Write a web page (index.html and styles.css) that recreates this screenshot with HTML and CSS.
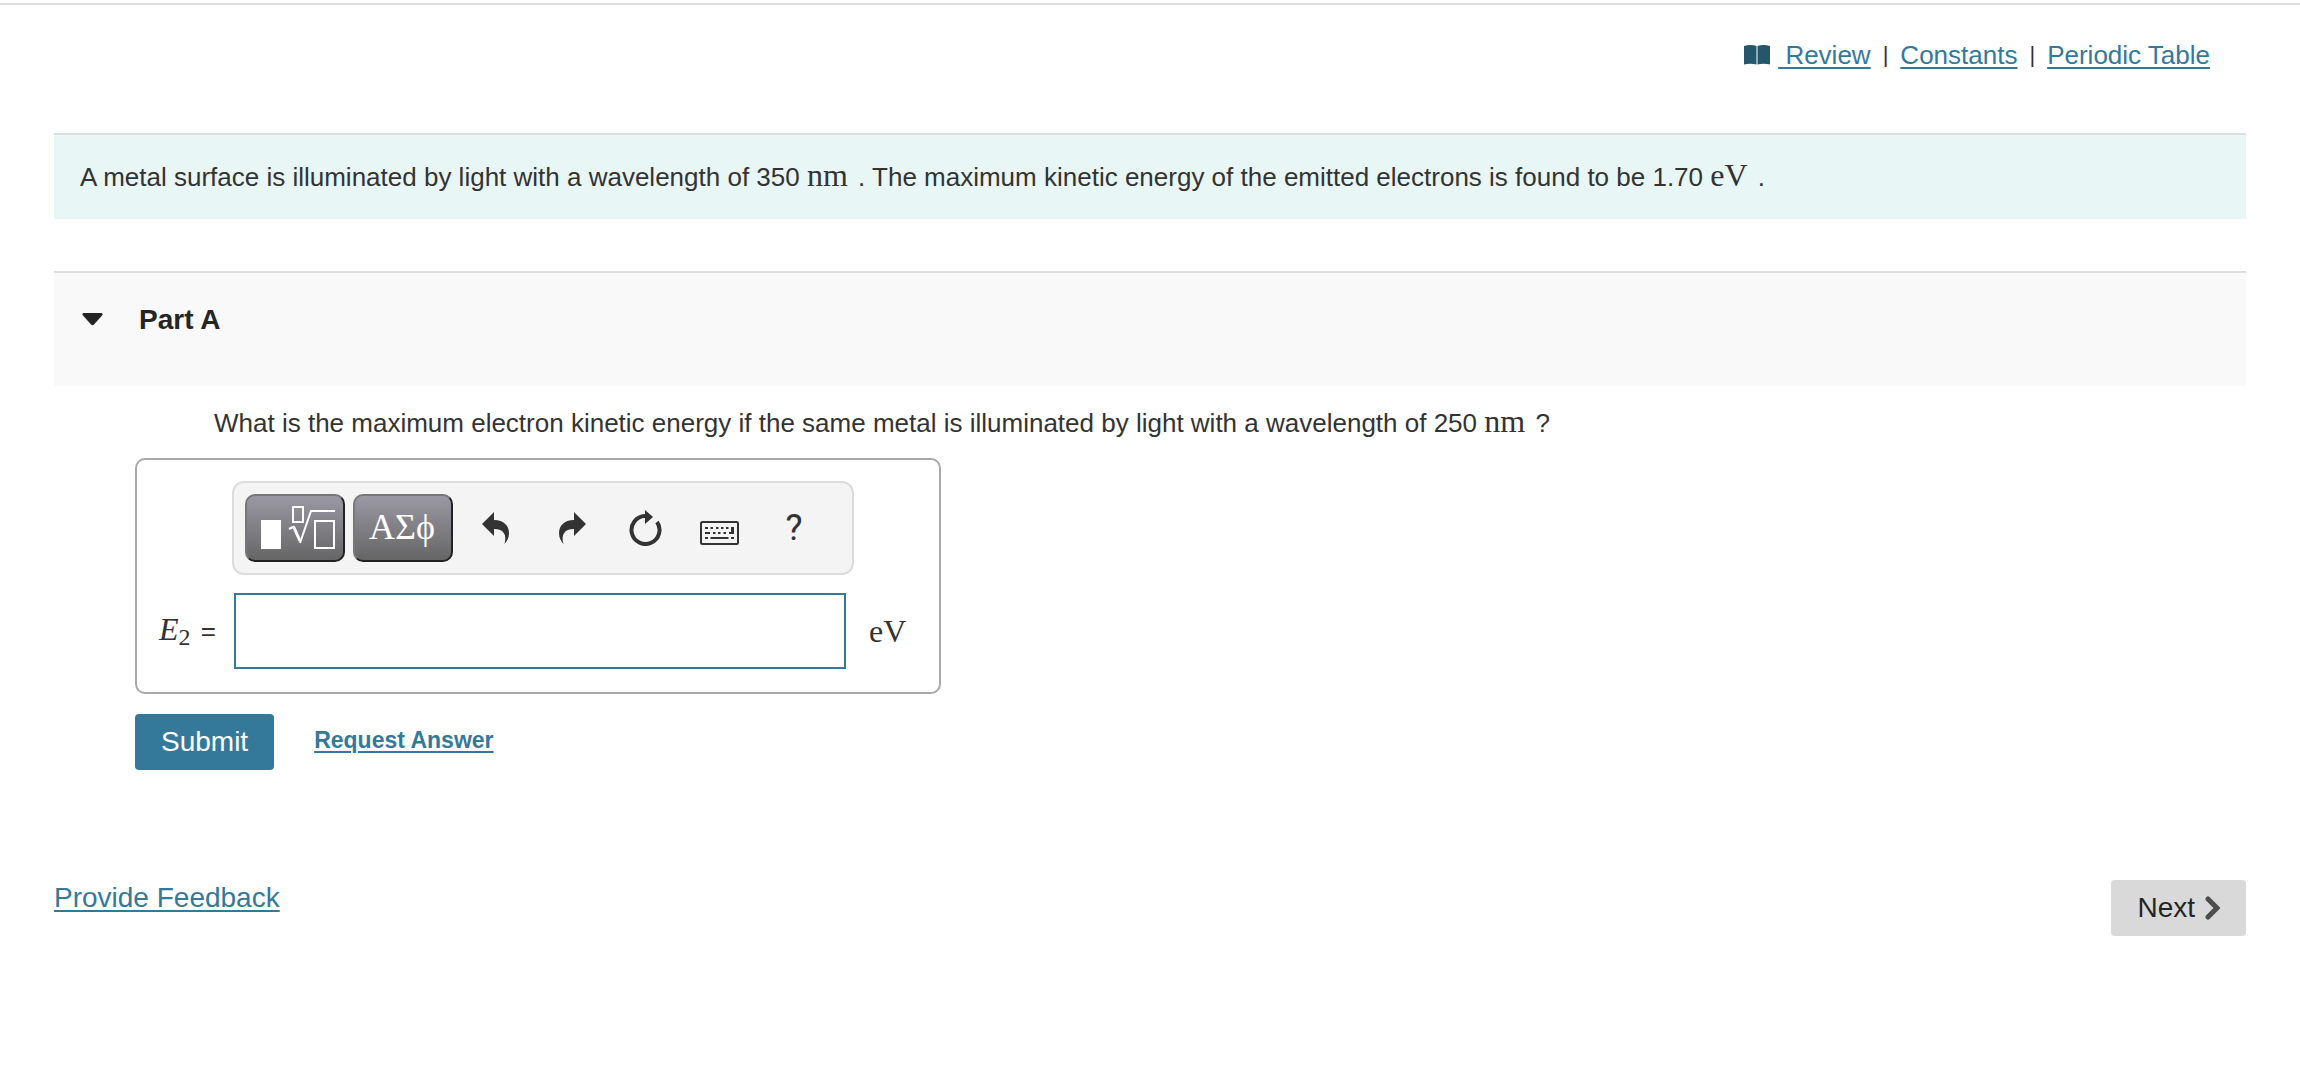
FILE: index.html
```html
<!DOCTYPE html>
<html lang="en">
<head>
  <meta charset="UTF-8" />
  <title>Part A - Photoelectric Effect</title>
  <link rel="stylesheet" href="styles.css">
</head>
<body>
  <div class="page">
    <nav class="resources">
      <svg class="book" viewBox="0 0 26 20" width="26" height="20" aria-hidden="true">
        <path d="M0 1C4 -.3 9 -.3 12.500 1V19.500C9 18.500 4 18.500 0 19.500Z" />
        <path d="M26 1C22 -.3 17 -.3 13.500 1V19.500C17 18.500 22 18.500 26 19.500Z" />
      </svg>
      <a href="#review">&nbsp;Review</a>
      <span class="sep">|</span>
      <a href="#constants">Constants</a>
      <span class="sep">|</span>
      <a href="#periodic-table">Periodic Table</a>
    </nav>

    <p class="problem">A metal surface is illuminated by light with a wavelength of 350 <span class="math">nm</span> . The maximum kinetic energy of the emitted electrons is found to be 1.70 <span class="math">eV</span> .</p>

    <header class="part-header">
      <button class="toggle" type="button" aria-label="Collapse Part A">
        <svg viewBox="0 0 21 15" width="21" height="15"><path d="M1.500 0H19.500Q21.500 .6 20 2.500L12 11.500Q10.500 13 9 11.500L1 2.500Q-.5 .6 1.500 0Z" /></svg>
      </button>
      <h2>Part A</h2>
    </header>

    <form class="part">
      <p class="question">What is the maximum electron kinetic energy if the same metal is illuminated by light with a wavelength of 250 <span class="math">nm</span> ?</p>

      <div class="answer-box">
        <div class="toolbar">
          <button class="palette" type="button" aria-label="Templates">
            <svg viewBox="-5 0 80 47" width="80" height="47">
              <rect x="1" y="15" width="20" height="29" fill="#fff" />
              <g fill="none" stroke="#fff" stroke-width="2">
                <rect x="33" y="2" width="10" height="15" />
                <rect x="55" y="16" width="19" height="27" />
                <path d="M29 24L34 21.500" />
                <path d="M33.500 21.500L40 36" stroke-width="3" />
                <path d="M40 38L51 6H75" />
              </g>
            </svg>
          </button>
          <button class="palette greek" type="button">ΑΣϕ</button>
          <div class="tools">
            <button class="tool" type="button" aria-label="Undo">
              <svg viewBox="0 0 33 32" width="33" height="32"><path d="M0 12L12 0V8C22 8 27 14 27 21C27 26 25 29 22.500 32C25 23 22 17 12 17V24Z" /></svg>
            </button>
            <button class="tool" type="button" aria-label="Redo">
              <svg viewBox="0 0 27 32" width="27" height="32"><path d="M27 12L15 0V8C5 8 0 14 0 21C0 26 2 29 4.500 32C2 23 5 17 15 17V24Z" /></svg>
            </button>
            <button class="tool" type="button" aria-label="Reset">
              <svg viewBox="0 0 34 36" width="34" height="36">
                <path d="M16 6A14 14 0 1 0 28 12" fill="none" stroke="#333" stroke-width="4" />
                <path d="M16 0L24 7L16 14Z" />
              </svg>
            </button>
            <button class="tool keyboard" type="button" aria-label="Keyboard shortcuts">
              <svg viewBox="0 0 41 24" width="41" height="24">
                <rect x="1" y="1" width="37" height="22" rx="1.500" fill="none" stroke="#333" stroke-width="2" />
                <path d="M5 6h3v2h-3zM10.500 6h2.500v2h-2.500zM16 6h2.500v2h-2.500zM21 6h2.500v2h-2.500zM26 6h2.500v2h-2.500zM31 6h3v7h-5v-2h2zM5 11h5v2h-5zM13 11h2.500v2h-2.500zM18 11h2.500v2h-2.500zM23.500 11h2.500v2h-2.500zM5 16h3v2h-3zM10.500 16h18v2h-18zM31 16h3v2h-3z" />
              </svg>
            </button>
            <button class="tool help" type="button">?</button>
          </div>
        </div>

        <div class="entry">
          <label for="answer"><span class="math"><i>E</i><sub>2</sub></span> =</label>
          <input id="answer" type="text">
          <span class="math">eV</span>
        </div>
      </div>

      <div class="actions">
        <button class="submit" type="submit">Submit</button>
        <a class="request" href="#request">Request Answer</a>
      </div>
    </form>

    <footer>
      <a href="#feedback">Provide Feedback</a>
      <button class="next" type="button">Next
        <svg viewBox="0 0 15 24" width="15" height="24" aria-hidden="true"><path d="M3 3L12 12L3 21" /></svg>
      </button>
    </footer>
  </div>
</body>
</html>
```
FILE: styles.css
```css
* {
  box-sizing: border-box;
}

body {
  margin: 3px 0 0;
  border-top: 2px solid #dedede;
  background: #fff;
  color: #333;
  font-family: "Liberation Sans", Arial, sans-serif;
  font-size: 26px;
  line-height: 32px;
}

.page {
  padding: 34px 54px;
}

h2, p {
  margin: 0;
}

button {
  padding: 0;
  border: none;
  background: none;
  font-family: inherit;
  cursor: pointer;
}

svg {
  display: block;
  fill: #333;
}

a {
  color: #34799a;
  text-decoration: underline;
  text-decoration-thickness: 2px;
  text-underline-offset: 3px;
}

.math {
  margin-right: 3px;
  font-family: "Liberation Serif", "Times New Roman", serif;
  font-size: 32px;
  line-height: 24px;
}

.resources {
  display: flex;
  justify-content: flex-end;
  align-items: center;
  padding-right: 36px;
  margin-bottom: 62px;
}

.book {
  margin-right: 8px;
  fill: #24576b;
}

.sep {
  margin: 0 12px;
  font-size: 22px;
}

.problem {
  padding: 26px;
  border-top: 2px solid #dedede;
  background: #e8f6f6;
}

.part-header {
  display: flex;
  align-items: center;
  gap: 36px;
  margin-top: 52px;
  padding: 30px 28px 49px;
  border-top: 2px solid #dedede;
  background: #f9f9f9;
}

.toggle svg {
  fill: #252525;
}

h2 {
  color: #252525;
  font-size: 28px;
  line-height: 34px;
}

.part {
  padding: 21px 81px 0;
}

.question {
  padding-left: 79px;
  margin-bottom: 19px;
}

.answer-box {
  width: fit-content;
  padding: 21px 30px 23px 22px;
  border: 2px solid #a9a9a9;
  border-radius: 10px;
}

.toolbar {
  display: flex;
  gap: 8px;
  width: fit-content;
  margin: 0 0 18px 73px;
  padding: 11px 21px 11px 11px;
  border: 2px solid #dcdcdc;
  border-radius: 12px;
  background: #f4f4f4;
}

.palette {
  display: flex;
  align-items: center;
  justify-content: center;
  width: 100px;
  height: 68px;
  border: 2px solid;
  border-color: #777 #222 #222 #777;
  border-radius: 10px;
  background: linear-gradient(#9a98a3, #666);
  color: #fff;
}

.greek {
  padding: 0 2px 2px 0;
  font-family: "Liberation Serif", "Times New Roman", serif;
  font-size: 36px;
}

.tools {
  display: flex;
}

.tool {
  display: flex;
  align-items: center;
  justify-content: center;
  width: 74px;
  color: #333;
}

.keyboard {
  padding-top: 10px;
}

.help {
  font-family: Roboto, sans-serif;
  font-size: 36px;
}

.entry {
  display: flex;
  align-items: center;
}

.entry label {
  width: 75px;
}

.entry sub {
  font-size: 24px;
  line-height: 0;
  vertical-align: -5px;
}

.entry input {
  width: 612px;
  height: 76px;
  margin-right: 23px;
  padding: 0 12px;
  border: 2px solid #34799a;
  background: #fff;
  font: inherit;
}

.actions {
  display: flex;
  gap: 40px;
  margin-top: 20px;
}

.submit {
  height: 56px;
  padding: 0 26px;
  border-radius: 4px;
  background: #34799a;
  color: #fff;
  font-size: 28px;
}

.request {
  font-size: 23px;
  font-weight: bold;
  line-height: 52px;
}

footer {
  display: flex;
  justify-content: space-between;
  align-items: flex-start;
  margin-top: 110px;
  font-size: 28px;
  line-height: 36px;
}

.next {
  display: flex;
  align-items: center;
  gap: 10px;
  height: 56px;
  padding: 0 26px;
  border-radius: 4px;
  background: #d9d9d9;
  color: #252525;
  font-size: 28px;
}

.next svg {
  fill: none;
  stroke: #4d4d4d;
  stroke-width: 5;
  stroke-linecap: round;
}
```
